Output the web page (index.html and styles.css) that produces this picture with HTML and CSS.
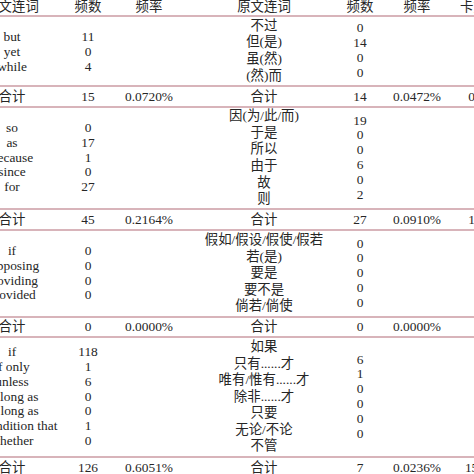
FILE: index.html
```html
<!DOCTYPE html>
<html>
<head>
<meta charset="utf-8">
<link rel="stylesheet" href="styles.css">
</head>
<body>
<div class="page">
  <div class="tbl">
    <div class="row head">
      <div class="c">原文连词</div>
      <div class="c">频数</div>
      <div class="c">频率</div>
      <div class="c">原文连词</div>
      <div class="c">频数</div>
      <div class="c">频率</div>
      <div class="c">卡方值</div>
    </div>

    <div class="row g1">
      <div class="c en">but<br>yet<br>while</div>
      <div class="c en">11<br>0<br>4</div>
      <div class="c"></div>
      <div class="c zh">不过<br>但(是)<br>虽(然)<br>(然)而</div>
      <div class="c en">0<br>14<br>0<br>0</div>
      <div class="c"></div>
      <div class="c"></div>
    </div>
    <div class="row tot t1">
      <div class="c">合计</div>
      <div class="c">15</div>
      <div class="c">0.0720%</div>
      <div class="c">合计</div>
      <div class="c">14</div>
      <div class="c">0.0472%</div>
      <div class="c">0.36</div>
    </div>

    <div class="row g2">
      <div class="c en">so<br>as<br>because<br>since<br>for</div>
      <div class="c en">0<br>17<br>1<br>0<br>27</div>
      <div class="c"></div>
      <div class="c zh">因(为/此/而)<br>于是<br>所以<br>由于<br>故<br>则</div>
      <div class="c en">19<br>0<br>0<br>6<br>0<br>2</div>
      <div class="c"></div>
      <div class="c"></div>
    </div>
    <div class="row tot t2">
      <div class="c">合计</div>
      <div class="c">45</div>
      <div class="c">0.2164%</div>
      <div class="c">合计</div>
      <div class="c">27</div>
      <div class="c">0.0910%</div>
      <div class="c">1.97</div>
    </div>

    <div class="row g3">
      <div class="c en">if<br>supposing<br>providing<br>provided</div>
      <div class="c en">0<br>0<br>0<br>0</div>
      <div class="c"></div>
      <div class="c zh">假如/假设/假使/假若<br>若(是)<br>要是<br>要不是<br>倘若/倘使</div>
      <div class="c en">0<br>0<br>0<br>0<br>0</div>
      <div class="c"></div>
      <div class="c"></div>
    </div>
    <div class="row tot t3">
      <div class="c">合计</div>
      <div class="c">0</div>
      <div class="c">0.0000%</div>
      <div class="c">合计</div>
      <div class="c">0</div>
      <div class="c">0.0000%</div>
      <div class="c"></div>
    </div>

    <div class="row g4">
      <div class="c en">if<br>if only<br>unless<br>as long as<br>so long as<br>on condition that<br>whether</div>
      <div class="c en">118<br>1<br>6<br>0<br>0<br>1<br>0</div>
      <div class="c"></div>
      <div class="c zh">如果<br>只有......才<br>唯有/惟有......才<br>除非......才<br>只要<br>无论/不论<br>不管</div>
      <div class="c en">6<br>1<br>0<br>0<br>0<br>0</div>
      <div class="c"></div>
      <div class="c"></div>
    </div>
    <div class="row tot t4">
      <div class="c">合计</div>
      <div class="c">126</div>
      <div class="c">0.6051%</div>
      <div class="c">合计</div>
      <div class="c">7</div>
      <div class="c">0.0236%</div>
      <div class="c">15.62</div>
    </div>
  </div>
</div>
</body>
</html>
```

FILE: styles.css
```css
html, body {
  margin: 0;
  padding: 0;
  background: #ffffff;
}

.page {
  width: 474px;
  height: 474px;
  overflow: hidden;
}

.tbl {
  width: 540px;
  margin-left: -38px;
  margin-top: -2px;
  font-family: "Liberation Serif", "Noto Sans CJK SC", serif;
  font-size: 13.4px;
  color: #262626;
}

.row {
  display: grid;
  grid-template-columns: 100px 52px 70px 160px 32px 82px 44px;
  box-sizing: border-box;
  border-bottom: 2px solid #d8b4ba;
}

.c {
  display: flex;
  align-items: center;
  justify-content: center;
  text-align: center;
  white-space: nowrap;
  line-height: 16px;
}

.c.en {
  line-height: 14.8px;
}

.c.zh {
  line-height: 16.6px;
}

.head { height: 19px; }
.g1 { height: 70px; }
.t1 { height: 21px; }
.g2 { height: 102px; }
.t2 { height: 21px; }
.g3 { height: 87px; }
.t3 { height: 20px; }
.g4 { height: 120px; }
.t4 { height: 22px; }

.g1 .c.en:first-child,
.g1 .c.en:nth-child(2) {
  padding-top: 3px;
}
```
